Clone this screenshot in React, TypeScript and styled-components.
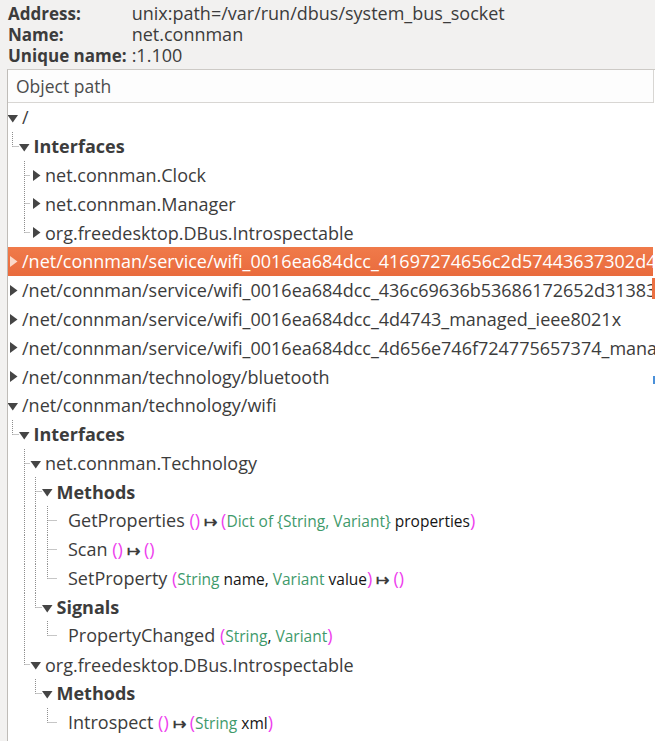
import React from 'react';
import styled, { createGlobalStyle } from 'styled-components';

const GlobalStyle = createGlobalStyle`
  html, body { margin: 0; padding: 0; background: #f2f1f0; }
  body { font-family: "Open Sans", "Noto Sans", sans-serif; color: #3c3c3c; overflow: hidden; }
`;

const Window = styled.div`
  position: relative;
  width: 655px;
  height: 741px;
  overflow: hidden;
  background: #f2f1f0;
  display: flex;
  flex-direction: column;
`;

const Info = styled.div`
  display: grid;
  grid-template-columns: max-content 1fr;
  column-gap: 5px;
  padding: 3px 0 3px 8px;
  line-height: 21px;
  color: #3c3c3c;
`;

const InfoLabel = styled.div`
  font-weight: 700;
  font-size: 17px;
`;

const InfoValue = styled.div`
  white-space: nowrap;
  font-size: 18px;
`;

const TreeBox = styled.div`
  flex: 1;
  margin-left: 7px;
  background: #ffffff;
  border-left: 1px solid #bfbcb8;
  border-top: 1px solid #cdcac6;
  overflow: hidden;
`;

const HeaderCell = styled.div`
  height: 33px;
  box-sizing: border-box;
  margin-right: 1px;
  border-bottom: 1px solid #d8d6d3;
  border-right: 1px solid #d8d6d3;
  display: flex;
  align-items: center;
  padding-left: 8px;
  font-size: 17.5px;
  color: #4c4c4c;
  background: #fdfdfd;
`;

const Row = styled.div<{ $selected?: boolean }>`
  height: 28.8px;
  display: flex;
  align-items: stretch;
  white-space: nowrap;
  margin-right: 2px;
  font-size: 18px;
  color: ${p => (p.$selected ? '#ffffff' : '#3c3c3c')};
  background: ${p => (p.$selected ? 'linear-gradient(#f07a4a, #e96b3d)' : 'transparent')};
`;

const GuideSvg = styled.svg`
  flex: 0 0 auto;
  display: block;
`;

const Label = styled.span<{ $bold?: boolean }>`
  flex: 0 0 auto;
  display: block;
  align-self: center;
  line-height: 24px;
  white-space: pre;
  font-weight: ${p => (p.$bold ? 700 : 400)};
`;

const Paren = styled.span`
  color: #ee3fee;
`;

const TypeName = styled.span`
  color: #3f9a6b;
  font-size: 15.5px;
`;

const ArgName = styled.span`
  color: #151515;
  font-size: 15.5px;
`;

const Arrow = styled.span`
  color: #3c3c3c;
  font-size: 15.5px;
  font-weight: 700;
`;

const ScrollMark = styled.div<{ $top: number; $h: number; $color: string; $w: number }>`
  position: absolute;
  right: 0;
  top: ${p => p.$top}px;
  width: ${p => p.$w}px;
  height: ${p => p.$h}px;
  background: ${p => p.$color};
`;

type Seg = { t: string; k?: 'p' | 'ty' | 'arg' | 'arr' };
type Exp = 'open' | 'closed' | 'none';
type Node = {
  label: string | Seg[];
  bold?: boolean;
  exp: Exp;
  selected?: boolean;
  children?: Node[];
};

type FlatRow = { node: Node; depth: number; cont: boolean[]; isLast: boolean };

const leaf = (label: Seg[]): Node => ({ label, exp: 'none' });

const tree: Node[] = [
  {
    label: '/',
    exp: 'open',
    children: [
      {
        label: 'Interfaces',
        bold: true,
        exp: 'open',
        children: [
          { label: 'net.connman.Clock', exp: 'closed' },
          { label: 'net.connman.Manager', exp: 'closed' },
          { label: 'org.freedesktop.DBus.Introspectable', exp: 'closed' },
        ],
      },
    ],
  },
  {
    label: '/net/connman/service/wifi_0016ea684dcc_41697274656c2d57443637302d4d4d4d',
    exp: 'closed',
    selected: true,
  },
  { label: '/net/connman/service/wifi_0016ea684dcc_436c69636b53686172652d31383332', exp: 'closed' },
  { label: '/net/connman/service/wifi_0016ea684dcc_4d4743_managed_ieee8021x', exp: 'closed' },
  { label: '/net/connman/service/wifi_0016ea684dcc_4d656e746f724775657374_managed_none', exp: 'closed' },
  { label: '/net/connman/technology/bluetooth', exp: 'closed' },
  {
    label: '/net/connman/technology/wifi',
    exp: 'open',
    children: [
      {
        label: 'Interfaces',
        bold: true,
        exp: 'open',
        children: [
          {
            label: 'net.connman.Technology',
            exp: 'open',
            children: [
              {
                label: 'Methods',
                bold: true,
                exp: 'open',
                children: [
                  leaf([
                    { t: 'GetProperties ' },
                    { t: '()', k: 'p' },
                    { t: ' ↦ ', k: 'arr' },
                    { t: '(', k: 'p' },
                    { t: 'Dict of {String, Variant}', k: 'ty' },
                    { t: ' properties', k: 'arg' },
                    { t: ')', k: 'p' },
                  ]),
                  leaf([
                    { t: 'Scan ' },
                    { t: '()', k: 'p' },
                    { t: ' ↦ ', k: 'arr' },
                    { t: '()', k: 'p' },
                  ]),
                  leaf([
                    { t: 'SetProperty ' },
                    { t: '(', k: 'p' },
                    { t: 'String', k: 'ty' },
                    { t: ' name, ', k: 'arg' },
                    { t: 'Variant', k: 'ty' },
                    { t: ' value', k: 'arg' },
                    { t: ')', k: 'p' },
                    { t: ' ↦ ', k: 'arr' },
                    { t: '()', k: 'p' },
                  ]),
                ],
              },
              {
                label: 'Signals',
                bold: true,
                exp: 'open',
                children: [
                  leaf([
                    { t: 'PropertyChanged ' },
                    { t: '(', k: 'p' },
                    { t: 'String', k: 'ty' },
                    { t: ', ', k: 'arg' },
                    { t: 'Variant', k: 'ty' },
                    { t: ')', k: 'p' },
                  ]),
                ],
              },
            ],
          },
          {
            label: 'org.freedesktop.DBus.Introspectable',
            exp: 'open',
            children: [
              {
                label: 'Methods',
                bold: true,
                exp: 'open',
                children: [
                  leaf([
                    { t: 'Introspect ' },
                    { t: '()', k: 'p' },
                    { t: ' ↦ ', k: 'arr' },
                    { t: '(', k: 'p' },
                    { t: 'String', k: 'ty' },
                    { t: ' xml', k: 'arg' },
                    { t: ')', k: 'p' },
                  ]),
                ],
              },
            ],
          },
        ],
      },
    ],
  },
];

function flatten(nodes: Node[], depth: number, cont: boolean[], out: FlatRow[]) {
  nodes.forEach((node, i) => {
    const isLast = i === nodes.length - 1;
    out.push({ node, depth, cont, isLast });
    if (node.children) {
      const next = depth >= 1 ? [...cont, !isLast] : cont;
      flatten(node.children, depth + 1, next, out);
    }
  });
  return out;
}

const H = 28.8;
const MID = 14.5;
const STEP = 11.5;
const lineX = (k: number) => Math.floor(4.5 + STEP * (k - 1)) + 0.5;

const Guides: React.FC<{ row: FlatRow }> = ({ row }) => {
  const { depth, cont, isLast, node } = row;
  const w = STEP * depth + 14;
  const e = STEP * depth;
  const stroke = '#8c8c8c';
  const tri = node.selected ? '#fbd9c9' : '#454545';
  const parts: React.ReactNode[] = [];
  cont.forEach((c, j) => {
    if (c) {
      const x = lineX(j + 1);
      parts.push(<line key={'a' + j} x1={x} x2={x} y1={0} y2={H} stroke={stroke} strokeDasharray="1 1" />);
    }
  });
  if (depth >= 1) {
    const x = lineX(depth);
    parts.push(
      <line key="own" x1={x} x2={x} y1={0} y2={isLast ? MID : H} stroke={stroke} strokeDasharray="1 1" />
    );
    const end = node.exp === 'none' ? x + 10 : Math.round(e) - 1;
    parts.push(<line key="stub" x1={x} x2={end} y1={MID} y2={MID} stroke={stroke} strokeDasharray="1 1" />);
  }
  if (node.exp === 'open') {
    parts.push(
      <polygon key="tri" points={`${e - 0.5},${MID - 2.5} ${e + 10},${MID - 2.5} ${e + 4.75},${MID + 5}`} fill={tri} />
    );
  } else if (node.exp === 'closed') {
    parts.push(
      <polygon key="tri" points={`${e + 2},${MID - 5.5} ${e + 9.5},${MID} ${e + 2},${MID + 5.5}`} fill={tri} />
    );
  }
  return (
    <GuideSvg width={w} height={H} viewBox={`0 0 ${w} ${H}`}>
      {parts}
    </GuideSvg>
  );
};

const renderLabel = (label: string | Seg[]) => {
  if (typeof label === 'string') return label;
  return label.map((s, i) => {
    switch (s.k) {
      case 'p':
        return <Paren key={i}>{s.t}</Paren>;
      case 'ty':
        return <TypeName key={i}>{s.t}</TypeName>;
      case 'arg':
        return <ArgName key={i}>{s.t}</ArgName>;
      case 'arr':
        return <Arrow key={i}>{s.t}</Arrow>;
      default:
        return <React.Fragment key={i}>{s.t}</React.Fragment>;
    }
  });
};

export default function App() {
  const rows = flatten(tree, 0, [], []);
  return (
    <>
      <GlobalStyle />
      <Window>
        <Info>
          <InfoLabel>Address:</InfoLabel>
          <InfoValue>unix:path=/var/run/dbus/system_bus_socket</InfoValue>
          <InfoLabel>Name:</InfoLabel>
          <InfoValue>net.connman</InfoValue>
          <InfoLabel>Unique name:</InfoLabel>
          <InfoValue>:1.100</InfoValue>
        </Info>
        <TreeBox>
          <HeaderCell>Object path</HeaderCell>
          {rows.map((r, i) => (
            <Row key={i} $selected={r.node.selected}>
              <Guides row={r} />
              <Label $bold={r.node.bold}>{renderLabel(r.node.label)}</Label>
            </Row>
          ))}
        </TreeBox>
        <ScrollMark $top={278} $h={21} $w={3} $color="#ec7142" />
        <ScrollMark $top={376} $h={8} $w={2} $color="#4a90d9" />
      </Window>
    </>
  );
}
